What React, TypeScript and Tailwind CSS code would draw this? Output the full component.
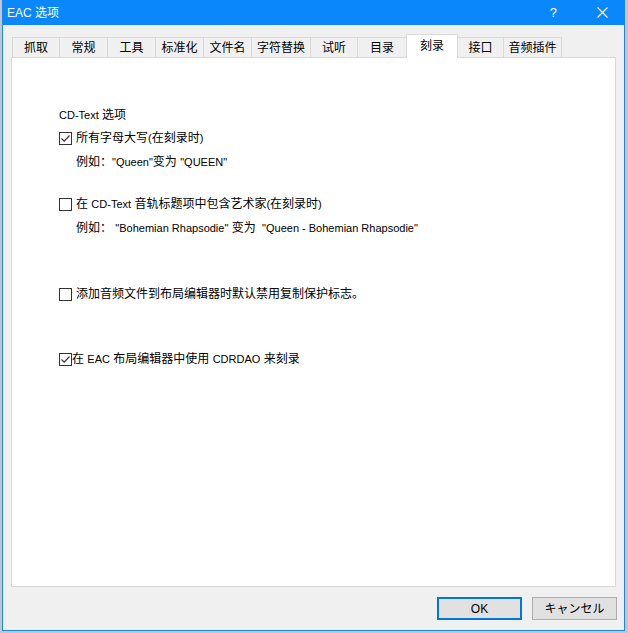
const FONT = { fontFamily: '"Liberation Sans", "Noto Sans CJK SC", sans-serif' };

const tabs = [
  { label: "抓取", w: 48 },
  { label: "常规", w: 49 },
  { label: "工具", w: 49 },
  { label: "标准化", w: 49 },
  { label: "文件名", w: 49 },
  { label: "字符替换", w: 60 },
  { label: "试听", w: 48 },
  { label: "目录", w: 50 },
  { label: "刻录", w: 52, active: true },
  { label: "接口", w: 47 },
  { label: "音频插件", w: 59 },
];

// 拉丁文字稍窄一些
function L({ children }: { children: React.ReactNode }) {
  return <span className="text-[11px]">{children}</span>;
}

function CheckBox({ checked }: { checked?: boolean }) {
  return (
    <span className="flex h-[13px] w-[13px] shrink-0 items-center justify-center border border-[#333333] bg-white">
      {checked && (
        <svg width="11" height="11" viewBox="0 0 11 11">
          <path d="M1.5 5.5 L4.2 8.2 L9.5 2.5" fill="none" stroke="#333333" strokeWidth="1.2" />
        </svg>
      )}
    </span>
  );
}

export default function App() {
  return (
    <div className="flex h-[633px] w-[628px] bg-[#c3c6cb] pb-[2px] pl-[2px] pr-[3px]" style={FONT}>
      <div className="flex flex-1 flex-col border border-t-0 border-[#1a86f0] bg-[#f0f0f0] text-[12px] text-black">
        {/* 标题栏 */}
        <div className="flex h-[25px] shrink-0 items-center bg-[#0a88fb] pl-[4px] text-white">
          <span className="text-[12px]">EAC 选项</span>
          <span className="ml-auto mr-[40px] text-[13px]">?</span>
          <svg className="mr-[16px]" width="11" height="11" viewBox="0 0 11 11">
            <path d="M0.5 0.5 L10.5 10.5 M10.5 0.5 L0.5 10.5" stroke="white" strokeWidth="1.1" />
          </svg>
        </div>

        <div className="flex flex-1 flex-col px-[8px] pt-[9px]">
          {/* 选项卡 */}
          <div className="relative z-10 flex h-[23px] items-end pl-[1px]">
            {tabs.map((t) =>
              t.active ? (
                <div
                  key={t.label}
                  className="relative z-10 -mb-px -mr-px flex h-[24px] shrink-0 items-start justify-center border border-b-0 border-[#d9d9d9] bg-white pt-[2px]"
                  style={{ width: t.w }}
                >
                  {t.label}
                </div>
              ) : (
                <div
                  key={t.label}
                  className="-mr-px flex h-[20px] shrink-0 items-center justify-center border border-b-0 border-[#d9d9d9] bg-[#f0f0f0] pt-[1px]"
                  style={{ width: t.w }}
                >
                  {t.label}
                </div>
              )
            )}
          </div>

          {/* 面板 */}
          <div className="flex flex-1 flex-col border border-[#d9d9d9] bg-white pl-[47px] pt-[49px] leading-[16px]">
            <div>
              <L>CD-Text</L> 选项
            </div>
            <div className="mt-[7px] flex items-center gap-[4px]">
              <CheckBox checked />
              <span>
                所有字母大写<L>(</L>在刻录时<L>)</L>
              </span>
            </div>
            <div className="ml-[17px] mt-[8px]">
              例如：<L>&quot;Queen&quot;</L>变为 <L>&quot;QUEEN&quot;</L>
            </div>

            <div className="mt-[26px] flex items-center gap-[4px]">
              <CheckBox />
              <span>
                在 <L>CD-Text</L> 音轨标题项中包含艺术家<L>(</L>在刻录时<L>)</L>
              </span>
            </div>
            <div className="ml-[17px] mt-[8px] whitespace-pre">
              例如： <L>&quot;Bohemian Rhapsodie&quot;</L> 变为 <L> &quot;Queen - Bohemian Rhapsodie&quot;</L>
            </div>

            <div className="mt-[50px] flex items-center gap-[4px]">
              <CheckBox />
              <span>添加音频文件到布局编辑器时默认禁用复制保护标志。</span>
            </div>

            <div className="mt-[49px] flex items-center gap-[0px]">
              <CheckBox checked />
              <span>
                在 <L>EAC</L> 布局编辑器中使用 <L>CDRDAO</L> 来刻录
              </span>
            </div>
          </div>

          {/* 按钮 */}
          <div className="flex justify-end gap-[10px] pb-[10px] pt-[10px]">
            <button className="flex h-[23px] w-[85px] items-center justify-center border-2 border-[#0078d7] bg-[#e1e1e1]">
              OK
            </button>
            <button
              className="-mr-px flex h-[23px] w-[85px] items-center justify-center border border-[#adadad] bg-[#e1e1e1]"
              style={{ fontFamily: '"Liberation Sans", "Noto Sans CJK JP", sans-serif' }}
            >
              キャンセル
            </button>
          </div>
        </div>
      </div>
    </div>
  );
}
